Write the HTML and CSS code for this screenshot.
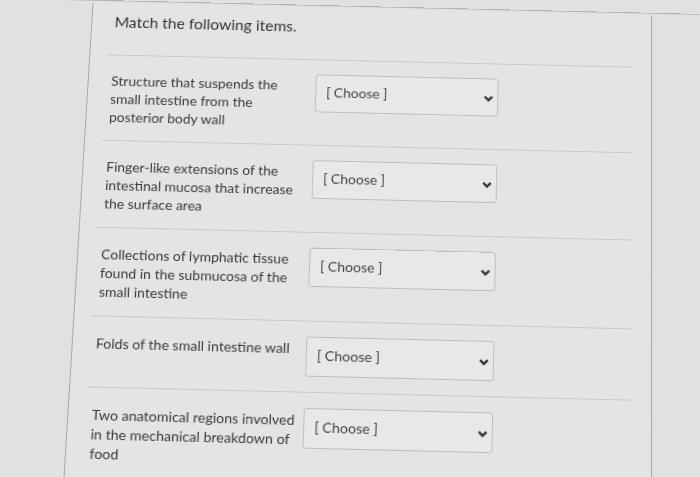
FILE: index.html
```html
<!DOCTYPE html>
<html>
<head>
<meta charset="utf-8">
<link rel="stylesheet" href="styles.css">
</head>
<body>
<div class="stage">
  <div class="card">
    <div class="title">Match the following items.</div>
    <div class="rows">
      <div class="row">
        <div class="label">Structure that suspends the<br>small intestine from the<br>posterior body wall</div>
        <div class="select"><span>[ Choose ]</span><svg class="chev" width="10" height="7" viewBox="0 0 10 7"><polyline points="1.2,1.2 5,5 8.8,1.2"/></svg></div>
      </div>
      <div class="row">
        <div class="label">Finger-like extensions of the<br>intestinal mucosa that increase<br>the surface area</div>
        <div class="select"><span>[ Choose ]</span><svg class="chev" width="10" height="7" viewBox="0 0 10 7"><polyline points="1.2,1.2 5,5 8.8,1.2"/></svg></div>
      </div>
      <div class="row">
        <div class="label">Collections of lymphatic tissue<br>found in the submucosa of the<br>small intestine</div>
        <div class="select"><span>[ Choose ]</span><svg class="chev" width="10" height="7" viewBox="0 0 10 7"><polyline points="1.2,1.2 5,5 8.8,1.2"/></svg></div>
      </div>
      <div class="row">
        <div class="label">Folds of the small intestine wall</div>
        <div class="select"><span>[ Choose ]</span><svg class="chev" width="10" height="7" viewBox="0 0 10 7"><polyline points="1.2,1.2 5,5 8.8,1.2"/></svg></div>
      </div>
      <div class="row">
        <div class="label">Two anatomical regions involved<br>in the mechanical breakdown of<br>food</div>
        <div class="select"><span>[ Choose ]</span><svg class="chev" width="10" height="7" viewBox="0 0 10 7"><polyline points="1.2,1.2 5,5 8.8,1.2"/></svg></div>
      </div>
    </div>
  </div>
</div>
</body>
</html>
```
FILE: styles.css
```css
html, body {
  margin: 0;
  padding: 0;
  background: #e0e1e0;
  overflow: hidden;
}
body {
  font-family: Lato, "Liberation Sans", sans-serif;
  color: #3b3d3e;
}
.stage {
  width: 700px;
  height: 477px;
  padding-top: 2px;
  box-sizing: border-box;
  border-top: 1px solid #b3b5b4;
  margin-top: 2px;
  transform-origin: 652px 238px;
  transform: perspective(2000px) rotateX(12deg) skewY(1.4deg);
}
.card {
  margin-left: 78px;
  width: 574px;
  height: 540px;
  box-sizing: border-box;
  border-left: 1px solid #a8aaa9;
  border-right: 1px solid #a8aaa9;
  background: #e3e5e4;
}
.title {
  padding: 10px 0 0 23px;
  font-size: 16px;
  line-height: 20px;
  color: #333536;
}
.rows {
  margin: 25px 20px 0 17px;
}
.row {
  display: grid;
  grid-template-columns: 204px 186px;
  column-gap: 4px;
  align-items: start;
  padding: 15px 0 15px 6px;
  border-top: 1px solid #c8cac9;
}
.label {
  padding-top: 2px;
  font-size: 14px;
  line-height: 19px;
  white-space: nowrap;
  color: #393b3c;
}
.select {
  height: 40px;
  box-sizing: border-box;
  border: 1px solid #bec0bf;
  border-radius: 3px;
  background: #e7e9e8;
  display: flex;
  align-items: center;
  justify-content: space-between;
  padding: 0 4px 0 10px;
  font-size: 14px;
  color: #444647;
}
.select span {
  margin-top: -3px;
}
.chev {
  fill: none;
  stroke: #2a2c2d;
  stroke-width: 2.3;
  margin-top: 2px;
}
```
